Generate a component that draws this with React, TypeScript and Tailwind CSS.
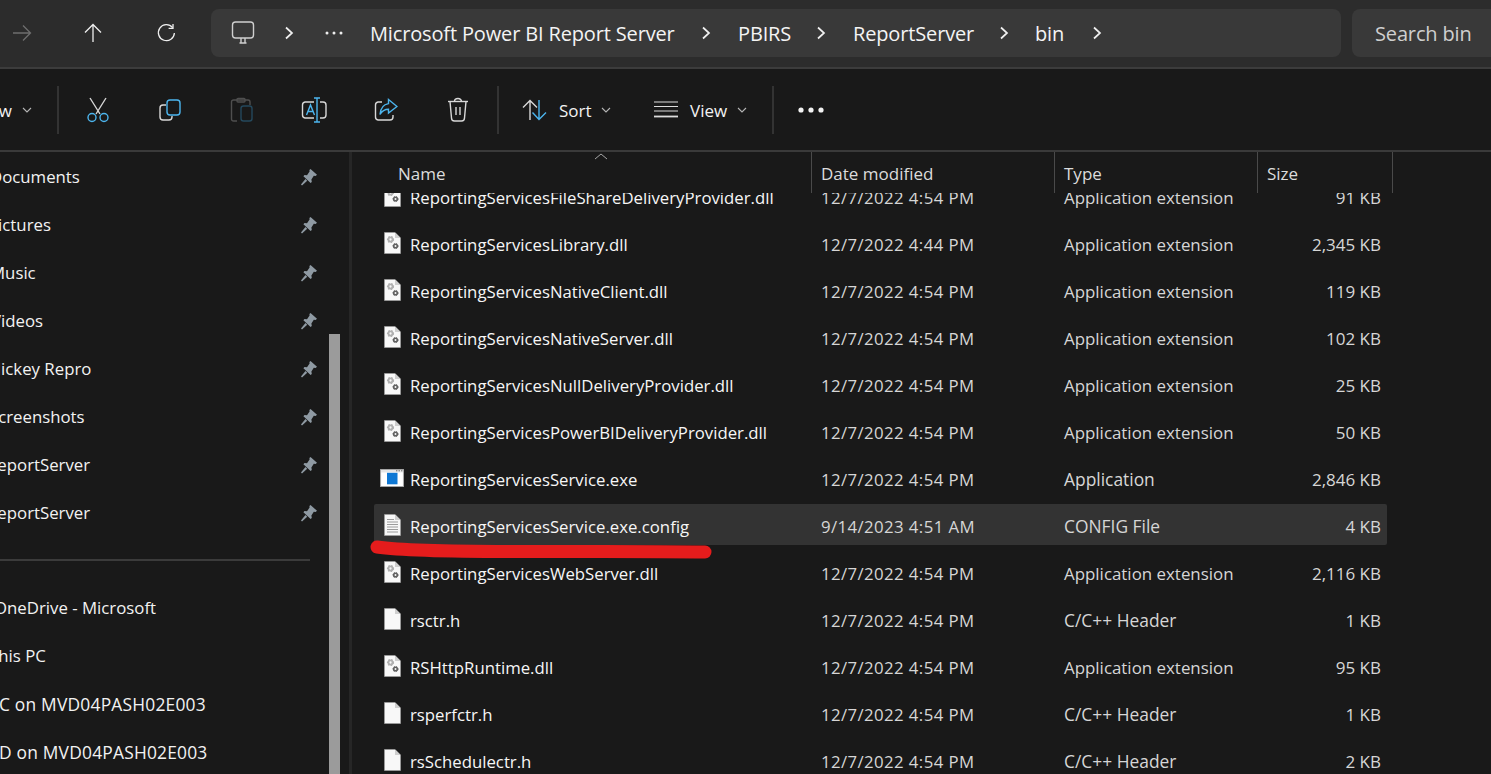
import React from "react";

const font = { fontFamily: '"Open Sans", "Noto Sans", sans-serif' };

function Chevron({ className = "" }: { className?: string }) {
  return (
    <svg width="10" height="14" viewBox="0 0 10 14" className={`shrink-0 ${className}`} fill="none" stroke="#f0f0f0" strokeWidth="1.7">
      <path d="M2 1.5 L8 7 L2 12.5" />
    </svg>
  );
}

function Caret() {
  return (
    <svg width="10" height="6" viewBox="0 0 10 6" fill="none" stroke="#b5b5b5" strokeWidth="1.1" className="shrink-0">
      <path d="M1 1 L5 5 L9 1" />
    </svg>
  );
}

function Sep() {
  return <div className="h-[48px] w-[2px] bg-[#333333] shrink-0" />;
}

function Pin() {
  return (
    <svg width="18" height="18" viewBox="0 0 18 18" fill="#8f9aa3" className="shrink-0">
      <path d="M10.5 1 L17 6.8 L15.6 8 L13.8 7.8 L11.4 11.6 L11.8 14 L10.6 15 L3.4 8.2 L4.5 7 L7 7.2 L9.6 3.6 L9.4 2 Z" />
      <path d="M5.4 11 L7.2 12.8 L2 17.4 L1 16.4 Z" />
    </svg>
  );
}

function Gear({ cx, cy, r, fill }: { cx: number; cy: number; r: number; fill: string }) {
  return (
    <g>
      <circle cx={cx} cy={cy} r={r} fill="none" stroke={fill} strokeWidth={r * 0.9} />
      <circle cx={cx} cy={cy} r={r * 1.45} fill="none" stroke={fill} strokeWidth={r * 0.5} strokeDasharray={`${r * 0.7} ${r * 0.7}`} />
    </g>
  );
}

function FileIcon({ kind }: { kind: string }) {
  if (kind === "exe") {
    return (
      <svg width="24" height="18" viewBox="0 0 24 18">
        <rect x="0.3" y="0.3" width="23.4" height="17.4" fill="#e6e6e6" stroke="#a5a5a5" strokeWidth="0.6" />
        <rect x="16" y="1" width="1.4" height="1.4" fill="#8a8a8a" />
        <rect x="18.5" y="1" width="1.4" height="1.4" fill="#8a8a8a" />
        <rect x="21" y="1" width="1.4" height="1.4" fill="#8a8a8a" />
        <rect x="1.2" y="3.5" width="21.6" height="13.5" fill="#ffffff" />
        <rect x="7" y="3.8" width="10.5" height="11.5" fill="#0f78d4" />
      </svg>
    );
  }
  return (
    <svg width="17" height="22" viewBox="0 0 17 22">
      <path d="M0.5 0.5 H11 L16.5 6 V21.5 H0.5 Z" fill="#f8f8f8" stroke="#a0a0a0" strokeWidth="0.7" />
      <path d="M11 0.5 V6 H16.5 Z" fill="#cfcfcf" />
      {kind === "dll" && (
        <>
          <Gear cx={6.5} cy={7.5} r={2.1} fill="#b0b0b0" />
          <Gear cx={11.5} cy={14} r={1.8} fill="#5f5f5f" />
        </>
      )}
      {kind === "cfg" && (
        <g stroke="#9c9c9c" strokeWidth="1">
          <path d="M3 5.5 H10" />
          <path d="M3 8 H14" />
          <path d="M3 10.5 H14" />
          <path d="M3 13 H14" />
          <path d="M3 15.5 H14" />
          <path d="M3 18 H14" />
        </g>
      )}
    </svg>
  );
}

const EXT = "Application extension";
const rows: [string, string, string, string, string][] = [
  ["dll", "ReportingServicesFileShareDeliveryProvider.dll", "12/7/2022 4:54 PM", EXT, "91 KB"],
  ["dll", "ReportingServicesLibrary.dll", "12/7/2022 4:44 PM", EXT, "2,345 KB"],
  ["dll", "ReportingServicesNativeClient.dll", "12/7/2022 4:54 PM", EXT, "119 KB"],
  ["dll", "ReportingServicesNativeServer.dll", "12/7/2022 4:54 PM", EXT, "102 KB"],
  ["dll", "ReportingServicesNullDeliveryProvider.dll", "12/7/2022 4:54 PM", EXT, "25 KB"],
  ["dll", "ReportingServicesPowerBIDeliveryProvider.dll", "12/7/2022 4:54 PM", EXT, "50 KB"],
  ["exe", "ReportingServicesService.exe", "12/7/2022 4:54 PM", "Application", "2,846 KB"],
  ["cfg", "ReportingServicesService.exe.config", "9/14/2023 4:51 AM", "CONFIG File", "4 KB"],
  ["dll", "ReportingServicesWebServer.dll", "12/7/2022 4:54 PM", EXT, "2,116 KB"],
  ["h", "rsctr.h", "12/7/2022 4:54 PM", "C/C++ Header", "1 KB"],
  ["dll", "RSHttpRuntime.dll", "12/7/2022 4:54 PM", EXT, "95 KB"],
  ["h", "rsperfctr.h", "12/7/2022 4:54 PM", "C/C++ Header", "1 KB"],
  ["h", "rsSchedulectr.h", "12/7/2022 4:54 PM", "C/C++ Header", "2 KB"],
];

const pinned: [string, string][] = [
  ["Documents", "-ml-[10px]"],
  ["Pictures", "-ml-[12px]"],
  ["Music", "-ml-[10px]"],
  ["Videos", "-ml-[9px]"],
  ["Mickey Repro", "-ml-[14px]"],
  ["Screenshots", "-ml-[11px]"],
  ["ReportServer", "-ml-[13px]"],
  ["ReportServer", "-ml-[13px]"],
];
const other: [string, string][] = [
  ["OneDrive - Microsoft", "-ml-[6px] text-[16.8px]"],
  ["This PC", "-ml-[11px] text-[16.8px]"],
  ["C on MVD04PASH02E003", "-ml-[1px] text-[17.4px] tracking-[0.2px]"],
  ["D on MVD04PASH02E003", "-ml-[1px] text-[17.4px] tracking-[0.2px]"],
];

function IconBtn({ children }: { children: React.ReactNode }) {
  return <div className="w-[72px] flex items-center justify-center shrink-0">{children}</div>;
}

export default function App() {
  return (
    <div className="relative w-[1491px] h-[774px] overflow-hidden bg-[#191919] text-[#f2f2f2]" style={font}>
      {/* Address row */}
      <div className="h-[67px] bg-[#2c2c2c] flex items-center pb-[1px]">
        <div className="w-[44px] flex justify-center">
          <svg width="20" height="18" viewBox="0 0 20 18" fill="none" stroke="#6e6e6e" strokeWidth="1.3">
            <path d="M1 9 H18.5 M11 1.5 L18.5 9 L11 16.5" />
          </svg>
        </div>
        <div className="ml-[27px] w-[44px] flex justify-center">
          <svg width="18" height="20" viewBox="0 0 18 20" fill="none" stroke="#eeeeee" strokeWidth="1.3">
            <path d="M9 19 V1.5 M1 9.5 L9 1.5 L17 9.5" />
          </svg>
        </div>
        <div className="ml-[29px] w-[44px] flex justify-center">
          <svg width="20" height="20" viewBox="0 0 20 20" fill="none" stroke="#eeeeee" strokeWidth="1.3">
            <path d="M16.6 4.6 A8 8 0 1 0 18.4 10" />
            <path d="M17 1 V5.4 H12.6" />
          </svg>
        </div>
        <div className="ml-[23px] w-[1130px] h-[48px] bg-[#393939] rounded-lg flex items-center shrink-0 text-[20px] text-[#f4f4f4] tracking-[-0.15px]">
          <svg width="24" height="24" viewBox="0 0 24 24" fill="none" stroke="#cfcfcf" strokeWidth="1.4" className="ml-[20px] shrink-0">
            <rect x="1.5" y="1" width="21" height="16" rx="3" />
            <path d="M8.5 22 H15.5 M10 17 V22 M14 17 V22" />
          </svg>
          <Chevron className="ml-[29px]" />
          <svg width="18" height="4" viewBox="0 0 18 4" fill="#eeeeee" className="ml-[31px] shrink-0">
            <circle cx="2" cy="2" r="1.5" />
            <circle cx="9" cy="2" r="1.5" />
            <circle cx="16" cy="2" r="1.5" />
          </svg>
          <span className="ml-[27px] w-[305px] whitespace-nowrap pt-[1px]">Microsoft Power BI Report Server</span>
          <Chevron className="ml-[26px]" />
          <span className="ml-[27px] w-[52px] whitespace-nowrap pt-[1px]">PBIRS</span>
          <Chevron className="ml-[26px]" />
          <span className="ml-[27px] w-[120px] whitespace-nowrap pt-[1px]">ReportServer</span>
          <Chevron className="ml-[26px]" />
          <span className="ml-[26px] w-[29px] whitespace-nowrap pt-[1px]">bin</span>
          <Chevron className="ml-[28px]" />
        </div>
        <div className="ml-[11px] flex-1 h-[48px] bg-[#393939] rounded-l-lg flex items-center pl-[23px] pt-[1px] text-[20px] text-[#cfcfcf] tracking-[-0.15px] whitespace-nowrap">
          Search bin
        </div>
      </div>
      <div className="h-[2px] bg-[#3c3c3c]" />

      {/* Toolbar */}
      <div className="h-[81px] flex items-center text-[17px] bg-[#191919]">
        <div className="w-[57px] shrink-0 flex items-center justify-end pr-[25px] overflow-hidden text-[#f2f2f2]">
          <span className="whitespace-nowrap mr-[10px] pt-[2px]">New</span>
          <Caret />
        </div>
        <Sep />
        <div className="ml-[3px] flex">
          <IconBtn>
            <svg width="24" height="26" viewBox="0 0 24 26" fill="none" strokeWidth="1.4">
              <path d="M4 1 L14 17 M20 1 L10 17" stroke="#d8d8d8" />
              <circle cx="6" cy="20.5" r="4" stroke="#4cb5ee" />
              <circle cx="18" cy="20.5" r="4" stroke="#4cb5ee" />
            </svg>
          </IconBtn>
          <IconBtn>
            <svg width="24" height="24" viewBox="0 0 24 24" fill="none" strokeWidth="1.4">
              <path d="M8 7 H5 A3 3 0 0 0 2 10 V19 A3 3 0 0 0 5 22 H11 A3 3 0 0 0 14 19 V18" stroke="#d8d8d8" />
              <rect x="9" y="2" width="13" height="15" rx="3" stroke="#4cb5ee" />
            </svg>
          </IconBtn>
          <IconBtn>
            <svg width="24" height="26" viewBox="0 0 24 26" fill="none" strokeWidth="1.4">
              <path d="M7 24 H3.5 A2 2 0 0 1 1.5 22 V5 A2 2 0 0 1 3.5 3 H18 A2 2 0 0 1 20 5 V8" stroke="#4f4f4f" />
              <rect x="7" y="1.5" width="8" height="3.5" rx="1" stroke="#4f4f4f" />
              <rect x="11" y="9" width="11" height="15" rx="2.5" stroke="#24485c" />
            </svg>
          </IconBtn>
          <IconBtn>
            <svg width="26" height="26" viewBox="0 0 26 26" fill="none" strokeWidth="1.4">
              <path d="M13 5 H4 A3 3 0 0 0 1.5 8 V18 A3 3 0 0 0 4 21 H13" stroke="#d8d8d8" />
              <path d="M19 5 H22 A3 3 0 0 1 25 8 V18 A3 3 0 0 1 22 21 H19" stroke="#d8d8d8" />
              <path d="M16 1 V25 M13 1 H19 M13 25 H19" stroke="#4cb5ee" />
              <path d="M5.5 18 L9.5 8 L13.5 18 M7 14.5 H12" stroke="#4cb5ee" />
            </svg>
          </IconBtn>
          <IconBtn>
            <svg width="24" height="24" viewBox="0 0 24 24" fill="none" strokeWidth="1.4">
              <path d="M8 4 H4 A3 3 0 0 0 1.5 7 V19 A3 3 0 0 0 4 22 H16 A3 3 0 0 0 19 19 V17" stroke="#d8d8d8" />
              <path d="M14.5 1.5 L23 8.5 L14.5 15 V11.3 C10.5 11.3 8 13 6 16.5 C6.5 10.5 9.5 6.3 14.5 5.6 Z" stroke="#4cb5ee" />
            </svg>
          </IconBtn>
          <IconBtn>
            <svg width="22" height="25" viewBox="0 0 22 25" fill="none" stroke="#d8d8d8" strokeWidth="1.4">
              <path d="M1 4.5 H21" />
              <path d="M7.5 4.5 A3.5 3 0 0 1 14.5 4.5" />
              <path d="M3 4.5 L4.5 21 A3 3 0 0 0 7.5 24 H14.5 A3 3 0 0 0 17.5 21 L19 4.5" />
              <path d="M9 10 V18 M13 10 V18" />
            </svg>
          </IconBtn>
        </div>
        <div className="ml-[3px]">
          <Sep />
        </div>
        <svg width="26" height="22" viewBox="0 0 26 22" fill="none" strokeWidth="1.4" className="ml-[23px] shrink-0">
          <path d="M8 21 V1.5 M1 8.5 L8 1.5 L15 8.5" stroke="#d8d8d8" />
          <path d="M17 1 V20.5 M10.5 13.5 L17 20.5 L24 13.5" stroke="#4cb5ee" />
        </svg>
        <span className="ml-[11px] w-[33px] pt-[2px] whitespace-nowrap">Sort</span>
        <span className="ml-[9px]"><Caret /></span>
        <svg width="24" height="17" viewBox="0 0 24 17" fill="none" stroke="#dcdcdc" strokeWidth="1" className="ml-[43px] shrink-0">
          <path d="M0 1 H24 M0 5.5 H24 M0 10 H24 M0 15.5 H24" />
          <path d="M0 15.5 H24" strokeWidth="1.8" />
        </svg>
        <span className="ml-[12px] w-[39px] pt-[2px] whitespace-nowrap">View</span>
        <span className="ml-[8px]"><Caret /></span>
        <div className="ml-[25px]">
          <Sep />
        </div>
        <svg width="26" height="6" viewBox="0 0 26 6" fill="#f2f2f2" className="ml-[24px] shrink-0">
          <circle cx="3" cy="3" r="2.6" />
          <circle cx="13" cy="3" r="2.6" />
          <circle cx="23" cy="3" r="2.6" />
        </svg>
      </div>
      <div className="h-[2px] bg-[#3a3a3a]" />

      {/* Body */}
      <div className="flex h-[622px]">
        {/* Sidebar */}
        <div className="relative w-[349px] shrink-0 overflow-hidden flex text-[16.8px]">
          <div className="w-[329px] shrink-0">
            <div className="pt-[1px]">
              {pinned.map(([t, m], i) => (
                <div key={i} className="h-[48px] flex items-center justify-between pr-[11px]">
                  <span className={`whitespace-nowrap ${m}`}>{t}</span>
                  <Pin />
                </div>
              ))}
            </div>
            <div className="mt-[22px] h-[2px] w-[310px] bg-[#3b3b3b]" />
            <div className="pt-[23px]">
              {other.map(([t, m], i) => (
                <div key={i} className="h-[48px] flex items-center">
                  <span className={`whitespace-nowrap ${m}`}>{t}</span>
                </div>
              ))}
            </div>
          </div>
          <div className="w-[11px] shrink-0 pt-[182px]">
            <div className="h-full bg-[#9b9b9b]" />
          </div>
        </div>
        <div className="w-[3px] shrink-0 bg-[#262626]" />

        {/* File list */}
        <div className="flex-1 min-w-0 flex flex-col">
          <div className="relative h-[41px] shrink-0 flex text-[17px] text-[#dcdcdc] bg-[#191919] z-10">
            <div className="w-[460px] pl-[46px] flex items-center border-r border-[#4a4a4a] pt-[2px]">Name</div>
            <div className="w-[243px] pl-[9px] flex items-center border-r border-[#4a4a4a] pt-[2px] whitespace-nowrap">Date modified</div>
            <div className="w-[203px] pl-[9px] flex items-center border-r border-[#4a4a4a] pt-[2px]">Type</div>
            <div className="w-[135px] pl-[9px] flex items-center border-r border-[#4a4a4a] pt-[2px]">Size</div>
            <svg width="14" height="7" viewBox="0 0 14 7" fill="none" stroke="#a5a5a5" strokeWidth="1" className="absolute left-[242px] top-[1px]">
              <path d="M1 6 L7 1 L13 6" />
            </svg>
          </div>
          <div className="flex-1 min-h-0 overflow-hidden">
            <div className="-mt-[19px] ml-[22px] w-[1013px]">
              {rows.map((r, i) => {
                const selected = r[0] === "cfg";
                return (
                  <div key={i} className="h-[47px] pt-[1px]">
                    <div className={`grid grid-cols-[447px_243px_203px_120px] items-center h-[41px] w-full pt-[4px] rounded-[2px] ${selected ? "bg-[#333333]" : ""}`}>
                      <div className="flex items-center">
                        <div className="w-[36px] flex justify-center items-center shrink-0 mb-[4px]">
                          <FileIcon kind={r[0]} />
                        </div>
                        <span className="text-[16.75px] whitespace-nowrap text-[#f6f6f6]">{r[1]}</span>
                      </div>
                      <div className="text-[16.8px] tracking-[0.4px] whitespace-nowrap text-[#d6d6d6]">{r[2]}</div>
                      <div className={`whitespace-nowrap text-[#d6d6d6] ${r[3] === EXT ? "text-[16.9px]" : "text-[17.4px]"}`}>{r[3]}</div>
                      <div className="text-[17px] whitespace-nowrap text-[#d6d6d6] text-right pr-[6px]">{r[4]}</div>
                    </div>
                  </div>
                );
              })}
            </div>
          </div>
        </div>
      </div>

      {/* Red marker annotation over the screenshot */}
      <svg className="absolute left-[365px] top-[538px]" width="352" height="26" viewBox="0 0 352 26" fill="none">
        <path d="M12 9 C40 13 90 13.5 150 13.5 C220 13.5 280 13 340 14" stroke="#e51c1c" strokeWidth="13" strokeLinecap="round" />
      </svg>
    </div>
  );
}
